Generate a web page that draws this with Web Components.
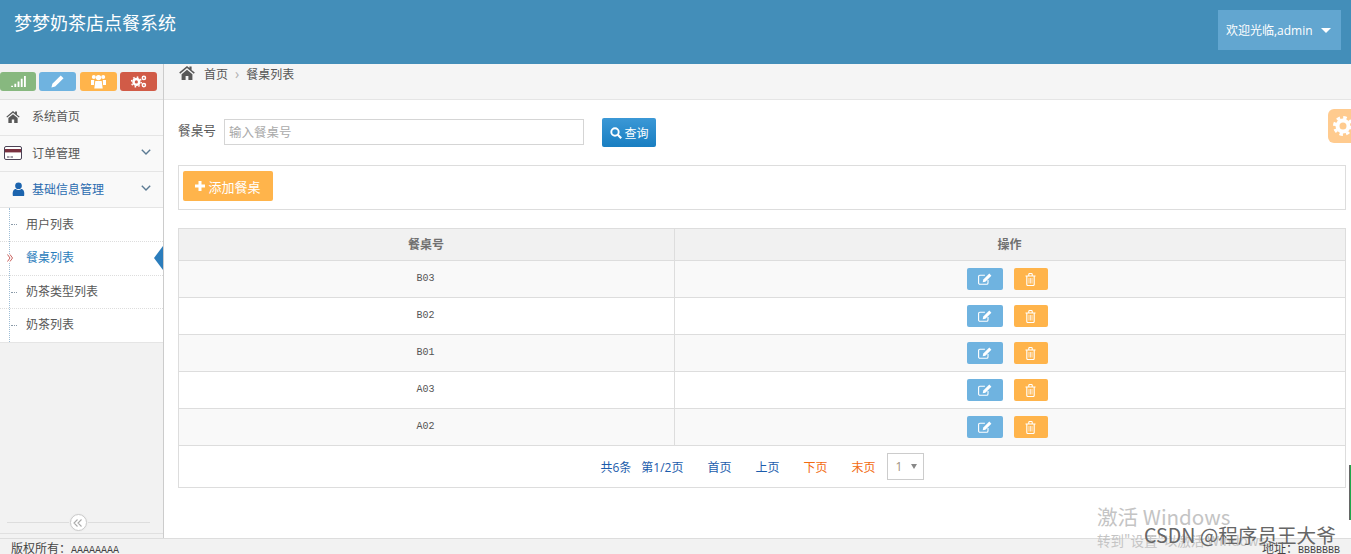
<!DOCTYPE html>
<html lang="zh">
<head>
<meta charset="utf-8">
<title>梦梦奶茶店点餐系统</title>
<style>
    html, body { margin: 0; height: 100%; }
    body {
        width: 1351px;
        height: 554px;
        overflow: hidden;
        position: relative;
        display: grid;
        grid-template-rows: 64px 1fr 16px;
        font: 12px "Open Sans", "Noto Sans CJK SC", sans-serif;
        color: #585858;
    }
    .middle { display: flex; min-height: 0; }
</style>
</head>
<body>
<app-header></app-header>
<div class="middle">
    <side-bar></side-bar>
    <main-panel></main-panel>
</div>
<app-footer></app-footer>
<settings-tab></settings-tab>
<desk-mark></desk-mark>

<script>
const ICONS = {
    home: `<svg viewBox="0 0 16 14" width="16" height="14"><path fill="currentColor" d="M8 0 .2 6.6l1 1.1L8 2l6.8 5.7 1-1.1L12.6 4V.6h-2.200v1.500zM2.600 8.200V14h4V10h2.800v4h4V8.200L8 3.700z"/></svg>`,
    signal: `<svg viewBox="0 0 16 12" width="15" height="11"><path fill="currentColor" d="M0 10.500h2V12H0zM3.500 8.500h2V12h-2zM7 6h2v6H7zM10.500 3h2v9h-2zM14 0h2v12h-2z"/></svg>`,
    pencil: `<svg viewBox="0 0 14 14" width="13" height="13"><path fill="currentColor" d="M10.500.500 13.500 3.500 4.500 12.500.500 13.500 1.500 9.500z"/></svg>`,
    users: `<svg viewBox="0 0 15 15" width="15" height="15"><circle cx="2.800" cy="3" r="2" fill="currentColor"/><circle cx="12.200" cy="3" r="2" fill="currentColor"/><circle cx="7.500" cy="3.600" r="2.700" fill="currentColor"/><path fill="currentColor" d="M0 6h3.200L3 11H0zM15 6h-3.200l.2 5h3zM4.300 7h6.400l1 7.500H3.300z"/></svg>`,
    cogs: `<svg viewBox="0 0 18 14" width="16" height="13"><circle cx="6" cy="7.500" r="3.200" fill="none" stroke="currentColor" stroke-width="2.800"/><circle cx="6" cy="7.500" r="5.500" fill="none" stroke="currentColor" stroke-width="1.600" stroke-dasharray="1.800 2.500"/><circle cx="14.500" cy="3" r="1.800" fill="none" stroke="currentColor" stroke-width="1.700"/><circle cx="14.500" cy="11" r="1.800" fill="none" stroke="currentColor" stroke-width="1.700"/></svg>`,
    card: `<svg viewBox="0 0 18 14" width="18" height="14"><rect x=".5" y=".5" width="17" height="13" rx="1.500" fill="#fff" stroke="#4c4356"/><rect x="1" y="3" width="16" height="3.400" fill="#7a3040"/><path d="M3 11h2.500M6.500 11H9" stroke="#4c4356"/></svg>`,
    user: `<svg viewBox="0 0 14 15" width="13" height="14"><circle cx="7" cy="4" r="3.600" fill="#1c64ae"/><path fill="#1c64ae" d="M1 15c-1-5 1-7.500 3-7.500 1.500 1.500 4.500 1.500 6 0 2 0 4 2.500 3 7.500z"/></svg>`,
    chevron: `<svg viewBox="0 0 10 6" width="10" height="6"><path fill="none" stroke="#5b7a93" stroke-width="1.400" d="M.8.800 5 5 9.200.800"/></svg>`,
    search: `<svg viewBox="0 0 12 12" width="12" height="12"><circle cx="5" cy="5" r="3.700" fill="none" stroke="currentColor" stroke-width="1.900"/><path stroke="currentColor" stroke-width="2.200" d="m7.800 7.800 3.400 3.400"/></svg>`,
    plus: `<svg viewBox="0 0 10 10" width="10" height="10"><path fill="currentColor" d="M3.500 0h3v3.500H10v3H6.500V10h-3V6.500H0v-3h3.500z"/></svg>`,
    edit: `<svg viewBox="0 0 14 12" width="14" height="12"><path fill="none" stroke="currentColor" stroke-width="1.100" d="M10 7v3a1.300 1.300 0 0 1-1.300 1.300H1.900A1.300 1.300 0 0 1 .6 10V3.600a1.300 1.300 0 0 1 1.300-1.300h5"/><path fill="currentColor" d="M11.300.600 13.400 2.700 7.400 8.700 4.700 9.300 5.300 6.600z"/></svg>`,
    trash: `<svg viewBox="0 0 11 13" width="11" height="13"><path fill="none" stroke="currentColor" stroke-width="1.100" d="M1.800 3.500v8a1 1 0 0 0 1 1h5.400a1 1 0 0 0 1-1v-8M.5 3h10M3.800 2.800V1.300a.8.800 0 0 1 .8-.8h1.800a.8.800 0 0 1 .8.800v1.500"/><path stroke="currentColor" d="M4 5v5.500M5.500 5v5.500M7 5v5.500" opacity=".7"/></svg>`
};

class AppHeader extends HTMLElement {
    constructor() {
        super();
        this.attachShadow({ mode: "open" }).innerHTML = `
        <style>
            :host { display: flex; justify-content: space-between; align-items: flex-start; background: #438eb9; color: #fff; }
            h1 { margin: 10px 0 0 14px; font-size: 18px; font-weight: 400; line-height: 26px; }
            .user { margin: 10px 10px 0 0; width: 123px; height: 40px; box-sizing: border-box; padding: 0 10px 0 8px; background: #62a6d0; display: flex; align-items: center; justify-content: space-between; font-size: 12px; }
            .caret { width: 0; height: 0; border: 5px solid transparent; border-top: 5px solid #fff; border-bottom: 0; }
        </style>
        <h1>梦梦奶茶店点餐系统</h1>
        <div class="user"><span>欢迎光临,admin</span><i class="caret"></i></div>`;
    }
}

class SideBar extends HTMLElement {
    constructor() {
        super();
        this.attachShadow({ mode: "open" }).innerHTML = `
        <style>
            :host { display: flex; flex-direction: column; width: 164px; flex: none; box-sizing: border-box; background: #f2f2f2; border-right: 1px solid #ccc; font-size: 12px; color: #585858; }
            .shortcuts { display: flex; gap: 3px; height: 36px; box-sizing: border-box; padding-top: 8px; border-bottom: 1px solid #e0e0e0; }
            .shortcuts b { display: flex; align-items: center; justify-content: center; width: 37px; height: 19px; border-radius: 3px; color: #fff; }
            .shortcuts b:first-child { width: 36px; }
            .shortcuts b:nth-child(3) { margin-left: 1px; }
            .item { display: flex; align-items: center; height: 35px; box-sizing: content-box; background: #f9f9f9; border-bottom: 1px solid #e5e5e5; padding-left: 4px; }
            .item > * { position: relative; top: -1px; }
            .item .ico { width: 28px; display: flex; justify-content: center; flex: none; color: #585858; }
            .item .ico.wide { width: 18px; margin-right: 10px; }
            .item span { flex: 1; }
            .item .chev { margin-right: 12px; display: flex; top: -2px; }
            .item.first .ico { width: 17px; margin-right: 11px; }
            .item.first span { top: -2px; }
            .item.first svg { width: 14px; height: 12px; }
            .item.on span { color: #2b6cb0; }
            .sub { background: #fff; border-bottom: 1px solid #e5e5e5; position: relative; padding: 0; margin: 0; list-style: none; }
            .sub::before { content: ""; position: absolute; left: 9px; top: 0; bottom: 0; border-left: 1px dotted #9dbdd6; }
            .sub li { position: relative; height: 33px; line-height: 31px; padding-left: 26px; border-bottom: 1px dotted #ddd; }
            .sub li:first-child { line-height: 33px; }
            .sub li:nth-child(3) { height: 32px; }
            .sub li:last-child { border-bottom: 0; }
            .sub li::before { content: ""; position: absolute; left: 11px; top: 16px; width: 6px; border-top: 1px dotted #8a9aa8; }
            .sub li.on { color: #2b7dbc; }
            .sub li.on::before { display: none; }
            .sub li.on::after { content: ""; position: absolute; right: 0; top: 4px; border-style: solid; border-color: transparent #2b7dbc transparent transparent; border-width: 12px 9px 12px 0; }
            .arrows { position: absolute; left: 7px; top: 12px; width: 6px; height: 8px; display: flex; color: #c9605c; background: #fff; }
            .grow { flex: 1; }
            .collapse { height: 26px; display: flex; align-items: center; justify-content: center; position: relative; border-bottom: 1px solid #e0e0e0; margin-bottom: 4px; }
            .collapse::before { content: ""; position: absolute; left: 7px; right: 13px; top: 15px; border-top: 1px solid #ddd; }
            .collapse i { position: relative; width: 15px; height: 15px; margin: 5px 7px 0 0; border: 1px solid #c9c9c9; border-radius: 50%; background: #fff; color: #aaa; display: flex; align-items: center; justify-content: center; box-shadow: 0 0 0 1px #eee; }
        </style>
        <nav class="shortcuts">
            <b style="background:#87b87f">${ICONS.signal}</b>
            <b style="background:#6fb3e0">${ICONS.pencil}</b>
            <b style="background:#ffb44b">${ICONS.users}</b>
            <b style="background:#d15b47">${ICONS.cogs}</b>
        </nav>
        <div class="item first"><div class="ico">${ICONS.home}</div><span>系统首页</span></div>
        <div class="item"><div class="ico wide">${ICONS.card}</div><span>订单管理</span><div class="chev">${ICONS.chevron}</div></div>
        <div class="item on"><div class="ico">${ICONS.user}</div><span>基础信息管理</span><div class="chev">${ICONS.chevron}</div></div>
        <ul class="sub">
            <li>用户列表</li>
            <li class="on"><i class="arrows"><svg viewBox="0 0 6 8" width="6" height="8"><path fill="none" stroke="currentColor" d="M.5.500 3 4 .5 7.500M3 .500 5.500 4 3 7.500"/></svg></i>餐桌列表</li>
            <li>奶茶类型列表</li>
            <li>奶茶列表</li>
        </ul>
        <div class="grow"></div>
        <div class="collapse"><i><svg viewBox="0 0 10 8" width="10" height="8"><path fill="none" stroke="currentColor" stroke-width="1.100" d="M4.500.500 1 4l3.500 3.500M8.500.500 5 4l3.500 3.500"/></svg></i></div>`;
    }
}

class MainPanel extends HTMLElement {
    constructor() {
        super();
        this.attachShadow({ mode: "open" }).innerHTML = `
        <style>
            :host { display: block; flex: 1; min-width: 0; background: #fff; }
            .crumbs { height: 36px; box-sizing: border-box; background: #f5f5f5; border-bottom: 1px solid #e5e5e5; padding-left: 15px; display: flex; align-items: flex-start; font-size: 12px; line-height: 21px; color: #555; }
            .crumbs svg { margin: 2px 9px 0 0; color: #585858; }
            .crumbs em { font-style: normal; font-size: 14px; line-height: 20px; color: #b0b0b0; margin: 0 7px; }
            .content { padding: 18px 5px 0 14px; }
        </style>
        <div class="crumbs">${ICONS.home}<span>首页</span><em>›</em><span>餐桌列表</span></div>
        <div class="content">
            <search-form></search-form>
            <tool-box></tool-box>
            <desk-table>
                <desk-row name="B03"></desk-row>
                <desk-row name="B02"></desk-row>
                <desk-row name="B01"></desk-row>
                <desk-row name="A03"></desk-row>
                <desk-row name="A02"></desk-row>
            </desk-table>
        </div>`;
    }
}

class SearchForm extends HTMLElement {
    constructor() {
        super();
        this.attachShadow({ mode: "open" }).innerHTML = `
        <style>
            :host { display: flex; align-items: flex-start; height: 47px; }
            label { font-size: 12.7px; line-height: 24px; margin-right: 8px; }
            input { width: 360px; height: 26px; box-sizing: border-box; margin: 1px 18px 0 0; padding: 0 4px 2px; border: 1px solid #d5d5d5; font: 12.5px "Noto Sans CJK SC", sans-serif; outline: 0; }
            input::placeholder { color: #aaa; }
            button { width: 54px; height: 29px; margin: 0; padding: 0; border: 0; border-radius: 2px; background: linear-gradient(#3b98d6, #197ec1); color: #fff; font: 12px "Noto Sans CJK SC", sans-serif; display: flex; align-items: center; justify-content: center; gap: 3px; }
        </style>
        <label>餐桌号</label>
        <input placeholder="输入餐桌号">
        <button>${ICONS.search}查询</button>`;
    }
}

class ToolBox extends HTMLElement {
    constructor() {
        super();
        this.attachShadow({ mode: "open" }).innerHTML = `
        <style>
            :host { display: block; height: 45px; box-sizing: border-box; border: 1px solid #ddd; padding: 5px 4px; margin-bottom: 18px; }
            button { width: 90px; height: 30px; padding: 0; border: 0; border-radius: 2px; background: #ffb44b; color: #fff; font: 13px "Noto Sans CJK SC", sans-serif; display: flex; align-items: center; justify-content: center; gap: 3px; }
        </style>
        <button>${ICONS.plus}添加餐桌</button>`;
    }
}

class DeskTable extends HTMLElement {
    constructor() {
        super();
        this.attachShadow({ mode: "open" }).innerHTML = `
        <style>
            :host { display: block; border: 1px solid #ddd; box-sizing: border-box; }
            .head { display: grid; grid-template-columns: 495px 1fr; height: 31px; background: #f1f1f1; border-bottom: 1px solid #ddd; font-weight: 700; line-height: 31px; text-align: center; color: #707070; font-size: 12px; }
            .head div { padding-right: 1px; }
            .head div + div { border-left: 1px solid #ddd; }
            ::slotted(desk-row:nth-child(odd)) { background: #f9f9f9; }
            .pager { height: 41px; display: flex; align-items: center; justify-content: center; color: #1c5cac; font-size: 12px; }
            .pager span { white-space: nowrap; }
            .orange { color: #f26a0f; }
            .sel { margin-left: 11px; width: 37px; height: 27px; box-sizing: border-box; border: 1px solid #ccc; color: #a09080; display: flex; align-items: center; justify-content: space-between; padding: 0 6px 0 8px; }
            .sel i { border: 3px solid transparent; border-top: 5px solid #888; border-bottom: 0; }
        </style>
        <div class="head"><div>餐桌号</div><div>操作</div></div>
        <slot></slot>
        <div class="pager">
            <span style="margin-right:10px">共6条</span>
            <span style="margin-right:24px">第1/2页</span>
            <span style="margin-right:24px">首页</span>
            <span style="margin-right:24px">上页</span>
            <span class="orange" style="margin-right:24px">下页</span>
            <span class="orange">末页</span>
            <div class="sel"><span>1</span><i></i></div>
        </div>`;
    }
}

class DeskRow extends HTMLElement {
    constructor() {
        super();
        this.attachShadow({ mode: "open" }).innerHTML = `
        <style>
            :host { display: grid; grid-template-columns: 495px 1fr; height: 37px; box-sizing: border-box; border-bottom: 1px solid #ddd; }
            .name { display: flex; align-items: center; justify-content: center; padding: 0 2px 2px 0; font: 10px "Liberation Mono", monospace; color: #555; }
            .ops { border-left: 1px solid #ddd; display: flex; align-items: center; justify-content: center; gap: 11px; padding-right: 6px; }
            button { height: 22px; padding: 0; border: 0; border-radius: 2px; color: #fff; display: flex; align-items: center; justify-content: center; }
            .edit { width: 36px; background: #6fb3e0; }
            .del { width: 34px; background: #ffb44b; }
        </style>
        <div class="name"></div>
        <div class="ops">
            <button class="edit">${ICONS.edit}</button>
            <button class="del">${ICONS.trash}</button>
        </div>`;
    }
    connectedCallback() {
        this.shadowRoot.querySelector(".name").textContent = this.getAttribute("name");
    }
}

class AppFooter extends HTMLElement {
    constructor() {
        super();
        this.attachShadow({ mode: "open" }).innerHTML = `
        <style>
            :host { display: flex; justify-content: space-between; align-items: center; box-sizing: border-box; background: #f2f2f2; border-top: 1px solid #ddd; padding: 2px 11px 0; color: #444; font: 10px "Liberation Mono", "Noto Sans CJK SC", monospace; overflow: hidden; }
            b { font: 12px "Noto Sans CJK SC", sans-serif; }
        </style>
        <div><b>版权所有：</b>AAAAAAAA</div>
        <div><b>地址：</b>BBBBBBB</div>`;
    }
}

class SettingsTab extends HTMLElement {
    constructor() {
        super();
        this.attachShadow({ mode: "open" }).innerHTML = `
        <style>
            :host { position: absolute; right: 0; top: 109px; width: 23px; height: 34px; background: #ffcb8f; border-radius: 6px 0 0 6px; overflow: hidden; }
            svg { position: absolute; left: 5px; top: 7px; }
        </style>
        <svg viewBox="0 0 20 20" width="20" height="20"><circle cx="10" cy="10" r="5.500" fill="none" stroke="#fff" stroke-width="4"/><circle cx="10" cy="10" r="8.500" fill="none" stroke="#fff" stroke-width="3" stroke-dasharray="3.500 3.170"/></svg>`;
    }
}

class DeskMark extends HTMLElement {
    constructor() {
        super();
        this.attachShadow({ mode: "open" }).innerHTML = `
        <style>
            :host { position: absolute; left: 1097px; top: 504px; width: 254px; height: 50px; pointer-events: none; }
            .win { position: absolute; left: 0; top: -1px; font: 20.600px/26px "Noto Sans CJK SC", sans-serif; color: #c4c4c4; white-space: nowrap; }
            .go { position: absolute; left: 0; top: 27px; font: 13.500px/18px "Noto Sans CJK SC", sans-serif; color: #c4c4c4; white-space: nowrap; }
            .csdn { position: absolute; left: 47px; top: 19px; font: 19.600px/24px "Noto Sans CJK SC", sans-serif; color: #666; white-space: nowrap; }
            .edge { position: absolute; right: 0; top: -39px; width: 1px; height: 55px; background: #1fa84a; border-left: 1px solid #666; }
        </style>
        <div class="win">激活 Windows</div>
        <div class="go">转到"设置"以激活 Windows。</div>
        <div class="csdn">CSDN @程序员王大爷</div>
        <div class="edge"></div>`;
    }
}

customElements.define("app-header", AppHeader);
customElements.define("side-bar", SideBar);
customElements.define("main-panel", MainPanel);
customElements.define("search-form", SearchForm);
customElements.define("tool-box", ToolBox);
customElements.define("desk-table", DeskTable);
customElements.define("desk-row", DeskRow);
customElements.define("app-footer", AppFooter);
customElements.define("settings-tab", SettingsTab);
customElements.define("desk-mark", DeskMark);
</script>
</body>
</html>
